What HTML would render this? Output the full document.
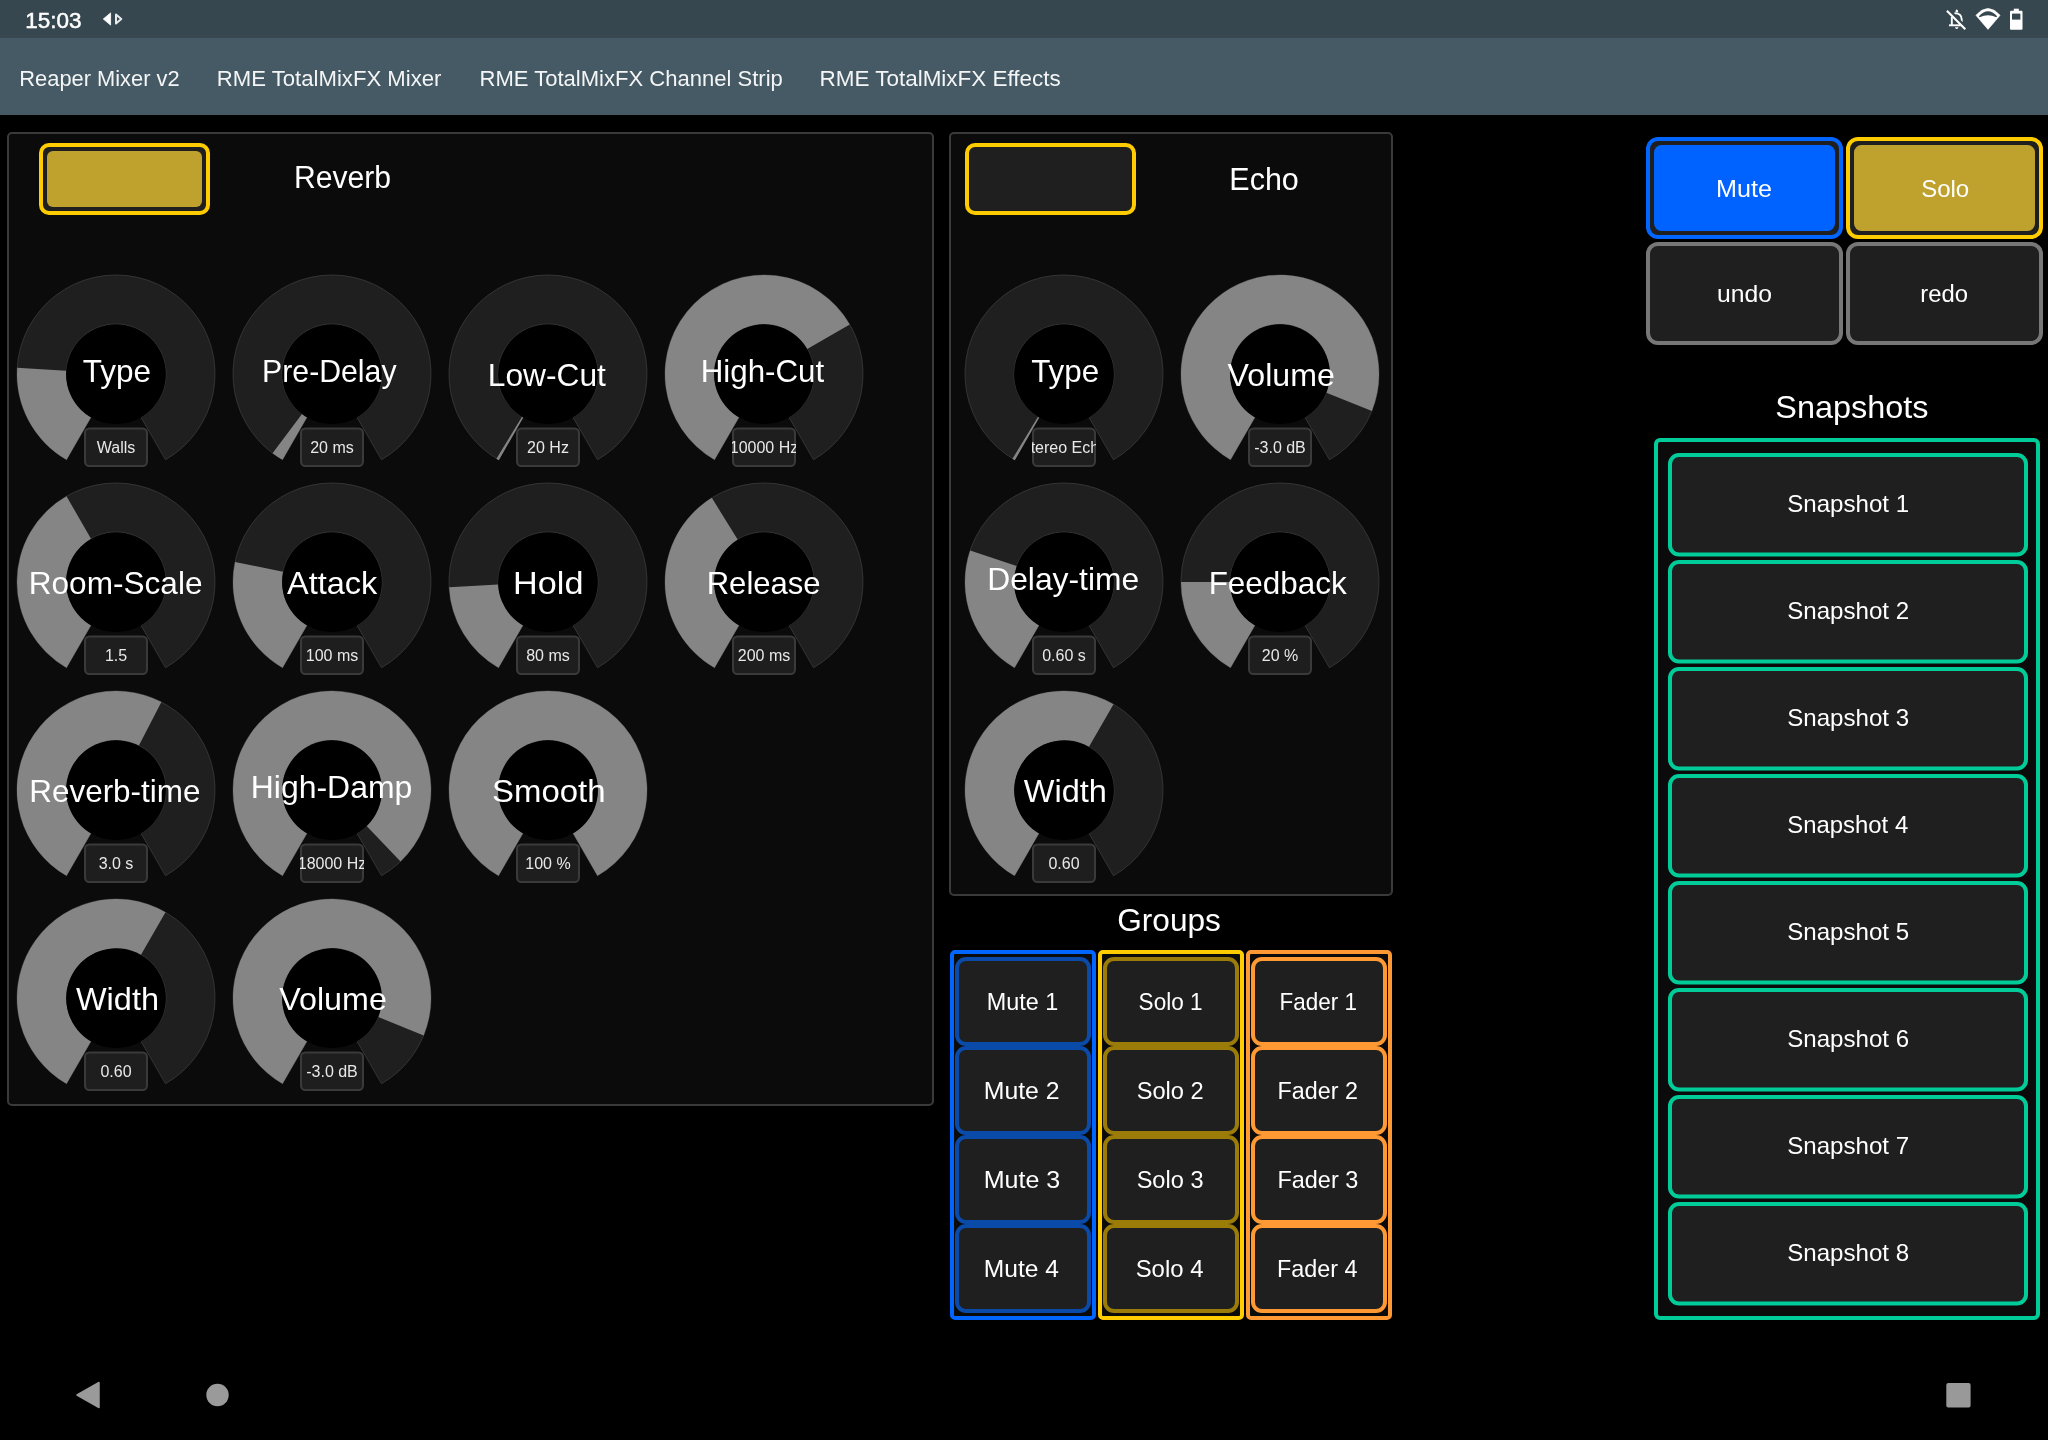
<!DOCTYPE html><html><head><meta charset="utf-8"><style>html,body{margin:0;padding:0;background:#000;width:2048px;height:1440px;overflow:hidden}svg{display:block;will-change:transform}text{font-family:"Liberation Sans", sans-serif}</style></head><body>
<svg width="2048" height="1440" viewBox="0 0 2048 1440">
<rect width="2048" height="1440" fill="#000"/>
<rect x="0" y="0" width="2048" height="38" fill="#37474f"/>
<text x="26" y="28.3" font-size="22" fill="#fff" text-anchor="start" transform="matrix(1.0212,0,0,1,-1.192,0)" stroke="#fff" stroke-width="0.5">15:03</text>
<path d="M103.3,19 L110.6,12.9 L110.6,25.1 Z" fill="#fff" stroke="#fff" stroke-width="0.8" stroke-linejoin="round"/>
<path d="M116,14.5 L121.3,19 L116,23.5 Z" fill="none" stroke="#e8eaeb" stroke-width="2" stroke-linejoin="round"/>
<g fill="none" stroke="#fff" stroke-width="1.9"><path d="M1951.8,25.3 L1951.8,17"/><path d="M1954.3,13.4 Q1961.7,12.9 1961.7,19.5 L1961.7,22"/><path d="M1949,25.3 L1960.6,25.3"/></g><path d="M1955.3,12.6 Q1955.6,9.5 1956.8,9.3 Q1958,9.5 1958.3,12.6 Z" fill="#fff"/><path d="M1955,27.2 L1958.5,27.2 Q1958.3,29 1956.75,29 Q1955.2,29 1955,27.2 Z" fill="#fff"/><line x1="1948.4" y1="9.4" x2="1966.8" y2="27.9" stroke="#37474f" stroke-width="2.2"/><line x1="1946.9" y1="10.8" x2="1965.3" y2="29.2" stroke="#fff" stroke-width="2.1"/>
<path d="M1975.9,15.3 Q1988,1.6 2000.1,15.3 L1988,29.4 Z" fill="#fff" stroke="#fff" stroke-width="0.6" stroke-linejoin="round"/>
<path d="M1978.9,16.2 Q1988,6.3 1997.1,16.2 L1996.3,17.3 Q1988,13.4 1979.7,17.3 Z" fill="#37474f"/>
<rect x="2010" y="10.8" width="12.5" height="19" rx="1" fill="#fff"/><rect x="2013.8" y="8.7" width="5" height="3" fill="#fff"/><rect x="2012" y="13.6" width="8.4" height="6" fill="#37474f"/>
<rect x="0" y="38" width="2048" height="77" fill="#455a64"/>
<text x="18.8" y="86" font-size="22" fill="#f4f5f6" text-anchor="start" transform="matrix(0.9937,0,0,1,0.633,0)" >Reaper Mixer v2</text>
<text x="216" y="86" font-size="22" fill="#f4f5f6" text-anchor="start" transform="matrix(1.0068,0,0,1,-0.680,0)" >RME TotalMixFX Mixer</text>
<text x="479" y="86" font-size="22" fill="#f4f5f6" text-anchor="start" transform="matrix(1.0020,0,0,1,-0.465,0)" >RME TotalMixFX Channel Strip</text>
<text x="819" y="86" font-size="22" fill="#f4f5f6" text-anchor="start" transform="matrix(1.0215,0,0,1,-17.118,0)" >RME TotalMixFX Effects</text>
<rect x="8.0" y="133.0" width="925" height="972" rx="4.0" fill="#0b0b0b" stroke="#3a3a3a" stroke-width="2"/>
<rect x="950.0" y="133.0" width="442" height="762" rx="4.0" fill="#0b0b0b" stroke="#3a3a3a" stroke-width="2"/>
<rect x="41.0" y="145.0" width="167" height="68" rx="8.0" fill="#1f1f1f" stroke="#ffcc00" stroke-width="4"/>
<rect x="47" y="151" width="155" height="56" rx="6" fill="#bfa22e"/>
<text x="343.5" y="188.1" font-size="31.5" fill="#fff" text-anchor="middle" transform="matrix(0.9567,0,0,1,13.916,0)" >Reverb</text>
<rect x="967.0" y="145.0" width="167" height="68" rx="8.0" fill="#1f1f1f" stroke="#ffcc00" stroke-width="4"/>
<text x="1264.5" y="189.8" font-size="31.5" fill="#fff" text-anchor="middle" transform="matrix(0.9676,0,0,1,40.526,0)" >Echo</text>
<path d="M66.50,459.74 A99,99 0 1 1 165.50,459.74 L141.00,417.30 A50,50 0 1 0 91.00,417.30 Z" fill="#1f1f1f" stroke="#343434" stroke-width="1"/>
<path d="M66.50,459.74 A99,99 0 0 1 17.20,367.78 L66.10,370.86 A50,50 0 0 0 91.00,417.30 Z" fill="#858585"/>
<circle cx="116" cy="374.3" r="49.8" fill="#000"/>
<text x="116" y="382.5" font-size="32" fill="#fff" text-anchor="middle" transform="matrix(0.9851,0,0,1,2.724,0)" >Type</text>
<rect x="85" y="428.5" width="62" height="37.5" rx="4.5" fill="#1e1e1e" stroke="#3a3a3a" stroke-width="2"/>
<clipPath id="c116_374"><rect x="84" y="427.5" width="64" height="39.5"/></clipPath>
<text x="116" y="453" font-size="16" fill="#e8e8e8" text-anchor="middle" clip-path="url(#c116_374)">Walls</text>
<path d="M282.50,459.74 A99,99 0 1 1 381.50,459.74 L357.00,417.30 A50,50 0 1 0 307.00,417.30 Z" fill="#1f1f1f" stroke="#343434" stroke-width="1"/>
<path d="M282.50,459.74 A99,99 0 0 1 272.56,453.17 L301.98,413.98 A50,50 0 0 0 307.00,417.30 Z" fill="#858585"/>
<circle cx="332" cy="374.3" r="49.8" fill="#000"/>
<text x="332" y="382.5" font-size="32" fill="#fff" text-anchor="middle" transform="matrix(0.9460,0,0,1,15.245,0)" >Pre-Delay</text>
<rect x="301" y="428.5" width="62" height="37.5" rx="4.5" fill="#1e1e1e" stroke="#3a3a3a" stroke-width="2"/>
<clipPath id="c332_374"><rect x="300" y="427.5" width="64" height="39.5"/></clipPath>
<text x="332" y="453" font-size="16" fill="#e8e8e8" text-anchor="middle" clip-path="url(#c332_374)">20 ms</text>
<path d="M498.50,459.74 A99,99 0 1 1 597.50,459.74 L573.00,417.30 A50,50 0 1 0 523.00,417.30 Z" fill="#1f1f1f" stroke="#343434" stroke-width="1"/>
<path d="M498.80,460.26 A99.3,99.3 0 0 1 496.41,458.85 L522.02,416.72 A50,50 0 0 0 523.23,417.43 Z" fill="#858585"/>
<circle cx="548" cy="374.3" r="49.8" fill="#000"/>
<text x="548" y="386" font-size="32" fill="#fff" text-anchor="middle" transform="matrix(0.9922,0,0,1,3.109,0)" >Low-Cut</text>
<rect x="517" y="428.5" width="62" height="37.5" rx="4.5" fill="#1e1e1e" stroke="#3a3a3a" stroke-width="2"/>
<clipPath id="c548_374"><rect x="516" y="427.5" width="64" height="39.5"/></clipPath>
<text x="548" y="453" font-size="16" fill="#e8e8e8" text-anchor="middle" clip-path="url(#c548_374)">20 Hz</text>
<path d="M714.50,459.74 A99,99 0 1 1 813.50,459.74 L789.00,417.30 A50,50 0 1 0 739.00,417.30 Z" fill="#1f1f1f" stroke="#343434" stroke-width="1"/>
<path d="M714.50,459.74 A99,99 0 1 1 849.74,324.50 L807.30,349.00 A50,50 0 1 0 739.00,417.30 Z" fill="#858585"/>
<circle cx="764" cy="374.3" r="49.8" fill="#000"/>
<text x="764" y="382.5" font-size="32" fill="#fff" text-anchor="middle" transform="matrix(0.9789,0,0,1,14.581,0)" >High-Cut</text>
<rect x="733" y="428.5" width="62" height="37.5" rx="4.5" fill="#1e1e1e" stroke="#3a3a3a" stroke-width="2"/>
<clipPath id="c764_374"><rect x="732" y="427.5" width="64" height="39.5"/></clipPath>
<text x="764" y="453" font-size="16" fill="#e8e8e8" text-anchor="middle" clip-path="url(#c764_374)">10000 Hz</text>
<path d="M66.50,667.74 A99,99 0 1 1 165.50,667.74 L141.00,625.30 A50,50 0 1 0 91.00,625.30 Z" fill="#1f1f1f" stroke="#343434" stroke-width="1"/>
<path d="M66.50,667.74 A99,99 0 0 1 66.50,496.26 L91.00,538.70 A50,50 0 0 0 91.00,625.30 Z" fill="#858585"/>
<circle cx="116" cy="582.3" r="49.8" fill="#000"/>
<text x="116" y="594" font-size="32" fill="#fff" text-anchor="middle" transform="matrix(0.9871,0,0,1,1.099,0)" >Room-Scale</text>
<rect x="85" y="636.5" width="62" height="37.5" rx="4.5" fill="#1e1e1e" stroke="#3a3a3a" stroke-width="2"/>
<clipPath id="c116_582"><rect x="84" y="635.5" width="64" height="39.5"/></clipPath>
<text x="116" y="661" font-size="16" fill="#e8e8e8" text-anchor="middle" clip-path="url(#c116_582)">1.5</text>
<path d="M282.50,667.74 A99,99 0 1 1 381.50,667.74 L357.00,625.30 A50,50 0 1 0 307.00,625.30 Z" fill="#1f1f1f" stroke="#343434" stroke-width="1"/>
<path d="M282.50,667.74 A99,99 0 0 1 235.06,561.92 L283.04,571.86 A50,50 0 0 0 307.00,625.30 Z" fill="#858585"/>
<circle cx="332" cy="582.3" r="49.8" fill="#000"/>
<text x="332" y="594" font-size="32" fill="#fff" text-anchor="middle" transform="matrix(1.0159,0,0,1,-5.082,0)" >Attack</text>
<rect x="301" y="636.5" width="62" height="37.5" rx="4.5" fill="#1e1e1e" stroke="#3a3a3a" stroke-width="2"/>
<clipPath id="c332_582"><rect x="300" y="635.5" width="64" height="39.5"/></clipPath>
<text x="332" y="661" font-size="16" fill="#e8e8e8" text-anchor="middle" clip-path="url(#c332_582)">100 ms</text>
<path d="M498.50,667.74 A99,99 0 1 1 597.50,667.74 L573.00,625.30 A50,50 0 1 0 523.00,625.30 Z" fill="#1f1f1f" stroke="#343434" stroke-width="1"/>
<path d="M498.50,667.74 A99,99 0 0 1 449.14,587.18 L498.07,584.62 A50,50 0 0 0 523.00,625.30 Z" fill="#858585"/>
<circle cx="548" cy="582.3" r="49.8" fill="#000"/>
<text x="548" y="594" font-size="32" fill="#fff" text-anchor="middle" transform="matrix(1.0700,0,0,1,-38.060,0)" >Hold</text>
<rect x="517" y="636.5" width="62" height="37.5" rx="4.5" fill="#1e1e1e" stroke="#3a3a3a" stroke-width="2"/>
<clipPath id="c548_582"><rect x="516" y="635.5" width="64" height="39.5"/></clipPath>
<text x="548" y="661" font-size="16" fill="#e8e8e8" text-anchor="middle" clip-path="url(#c548_582)">80 ms</text>
<path d="M714.50,667.74 A99,99 0 1 1 813.50,667.74 L789.00,625.30 A50,50 0 1 0 739.00,625.30 Z" fill="#1f1f1f" stroke="#343434" stroke-width="1"/>
<path d="M714.50,667.74 A99,99 0 0 1 711.83,497.86 L737.65,539.51 A50,50 0 0 0 739.00,625.30 Z" fill="#858585"/>
<circle cx="764" cy="582.3" r="49.8" fill="#000"/>
<text x="764" y="594" font-size="32" fill="#fff" text-anchor="middle" transform="matrix(0.9708,0,0,1,21.976,0)" >Release</text>
<rect x="733" y="636.5" width="62" height="37.5" rx="4.5" fill="#1e1e1e" stroke="#3a3a3a" stroke-width="2"/>
<clipPath id="c764_582"><rect x="732" y="635.5" width="64" height="39.5"/></clipPath>
<text x="764" y="661" font-size="16" fill="#e8e8e8" text-anchor="middle" clip-path="url(#c764_582)">200 ms</text>
<path d="M66.50,875.74 A99,99 0 1 1 165.50,875.74 L141.00,833.30 A50,50 0 1 0 91.00,833.30 Z" fill="#1f1f1f" stroke="#343434" stroke-width="1"/>
<path d="M66.50,875.74 A99,99 0 0 1 161.41,702.03 L138.93,745.57 A50,50 0 0 0 91.00,833.30 Z" fill="#858585"/>
<circle cx="116" cy="790.3" r="49.8" fill="#000"/>
<text x="116" y="802" font-size="32" fill="#fff" text-anchor="middle" transform="matrix(0.9828,0,0,1,0.849,0)" >Reverb-time</text>
<rect x="85" y="844.5" width="62" height="37.5" rx="4.5" fill="#1e1e1e" stroke="#3a3a3a" stroke-width="2"/>
<clipPath id="c116_790"><rect x="84" y="843.5" width="64" height="39.5"/></clipPath>
<text x="116" y="869" font-size="16" fill="#e8e8e8" text-anchor="middle" clip-path="url(#c116_790)">3.0 s</text>
<path d="M282.50,875.74 A99,99 0 1 1 381.50,875.74 L357.00,833.30 A50,50 0 1 0 307.00,833.30 Z" fill="#1f1f1f" stroke="#343434" stroke-width="1"/>
<path d="M282.50,875.74 A99,99 0 1 1 400.52,861.45 L366.61,826.09 A50,50 0 1 0 307.00,833.30 Z" fill="#858585"/>
<circle cx="332" cy="790.3" r="49.8" fill="#000"/>
<text x="332" y="798.5" font-size="32" fill="#fff" text-anchor="middle" transform="matrix(0.9981,0,0,1,0.185,0)" >High-Damp</text>
<rect x="301" y="844.5" width="62" height="37.5" rx="4.5" fill="#1e1e1e" stroke="#3a3a3a" stroke-width="2"/>
<clipPath id="c332_790"><rect x="300" y="843.5" width="64" height="39.5"/></clipPath>
<text x="332" y="869" font-size="16" fill="#e8e8e8" text-anchor="middle" clip-path="url(#c332_790)">18000 Hz</text>
<path d="M498.50,875.74 A99,99 0 1 1 597.50,875.74 L573.00,833.30 A50,50 0 1 0 523.00,833.30 Z" fill="#1f1f1f" stroke="#343434" stroke-width="1"/>
<path d="M498.50,875.74 A99,99 0 1 1 597.50,875.74 L573.00,833.30 A50,50 0 1 0 523.00,833.30 Z" fill="#858585"/>
<circle cx="548" cy="790.3" r="49.8" fill="#000"/>
<text x="548" y="802" font-size="32" fill="#fff" text-anchor="middle" transform="matrix(1.0292,0,0,1,-15.176,0)" >Smooth</text>
<rect x="517" y="844.5" width="62" height="37.5" rx="4.5" fill="#1e1e1e" stroke="#3a3a3a" stroke-width="2"/>
<clipPath id="c548_790"><rect x="516" y="843.5" width="64" height="39.5"/></clipPath>
<text x="548" y="869" font-size="16" fill="#e8e8e8" text-anchor="middle" clip-path="url(#c548_790)">100 %</text>
<path d="M66.50,1083.74 A99,99 0 1 1 165.50,1083.74 L141.00,1041.30 A50,50 0 1 0 91.00,1041.30 Z" fill="#1f1f1f" stroke="#343434" stroke-width="1"/>
<path d="M66.50,1083.74 A99,99 0 0 1 165.50,912.26 L141.00,954.70 A50,50 0 0 0 91.00,1041.30 Z" fill="#858585"/>
<circle cx="116" cy="998.3" r="49.8" fill="#000"/>
<text x="116" y="1010" font-size="32" fill="#fff" text-anchor="middle" transform="matrix(1.0167,0,0,1,-0.467,0)" >Width</text>
<rect x="85" y="1052.5" width="62" height="37.5" rx="4.5" fill="#1e1e1e" stroke="#3a3a3a" stroke-width="2"/>
<clipPath id="c116_998"><rect x="84" y="1051.5" width="64" height="39.5"/></clipPath>
<text x="116" y="1077" font-size="16" fill="#e8e8e8" text-anchor="middle" clip-path="url(#c116_998)">0.60</text>
<path d="M282.50,1083.74 A99,99 0 1 1 381.50,1083.74 L357.00,1041.30 A50,50 0 1 0 307.00,1041.30 Z" fill="#1f1f1f" stroke="#343434" stroke-width="1"/>
<path d="M282.50,1083.74 A99,99 0 1 1 423.66,1035.41 L378.29,1016.89 A50,50 0 1 0 307.00,1041.30 Z" fill="#858585"/>
<circle cx="332" cy="998.3" r="49.8" fill="#000"/>
<text x="332" y="1010" font-size="32" fill="#fff" text-anchor="middle" transform="matrix(1.0086,0,0,1,-1.791,0)" >Volume</text>
<rect x="301" y="1052.5" width="62" height="37.5" rx="4.5" fill="#1e1e1e" stroke="#3a3a3a" stroke-width="2"/>
<clipPath id="c332_998"><rect x="300" y="1051.5" width="64" height="39.5"/></clipPath>
<text x="332" y="1077" font-size="16" fill="#e8e8e8" text-anchor="middle" clip-path="url(#c332_998)">-3.0 dB</text>
<path d="M1014.50,459.74 A99,99 0 1 1 1113.50,459.74 L1089.00,417.30 A50,50 0 1 0 1039.00,417.30 Z" fill="#1f1f1f" stroke="#343434" stroke-width="1"/>
<path d="M1014.80,460.26 A99.3,99.3 0 0 1 1012.41,458.85 L1038.02,416.72 A50,50 0 0 0 1039.23,417.43 Z" fill="#858585"/>
<circle cx="1064" cy="374.3" r="49.8" fill="#000"/>
<text x="1064" y="382.5" font-size="32" fill="#fff" text-anchor="middle" transform="matrix(0.9806,0,0,1,21.785,0)" >Type</text>
<rect x="1033" y="428.5" width="62" height="37.5" rx="4.5" fill="#1e1e1e" stroke="#3a3a3a" stroke-width="2"/>
<clipPath id="c1064_374"><rect x="1032" y="427.5" width="64" height="39.5"/></clipPath>
<text x="1064" y="453" font-size="16" fill="#e8e8e8" text-anchor="middle" clip-path="url(#c1064_374)">Stereo Echo</text>
<path d="M1230.50,459.74 A99,99 0 1 1 1329.50,459.74 L1305.00,417.30 A50,50 0 1 0 1255.00,417.30 Z" fill="#1f1f1f" stroke="#343434" stroke-width="1"/>
<path d="M1230.50,459.74 A99,99 0 1 1 1371.86,410.93 L1326.39,392.65 A50,50 0 1 0 1255.00,417.30 Z" fill="#858585"/>
<circle cx="1280" cy="374.3" r="49.8" fill="#000"/>
<text x="1280" y="386" font-size="32" fill="#fff" text-anchor="middle" transform="matrix(1.0048,0,0,1,-4.943,0)" >Volume</text>
<rect x="1249" y="428.5" width="62" height="37.5" rx="4.5" fill="#1e1e1e" stroke="#3a3a3a" stroke-width="2"/>
<clipPath id="c1280_374"><rect x="1248" y="427.5" width="64" height="39.5"/></clipPath>
<text x="1280" y="453" font-size="16" fill="#e8e8e8" text-anchor="middle" clip-path="url(#c1280_374)">-3.0 dB</text>
<path d="M1014.50,667.74 A99,99 0 1 1 1113.50,667.74 L1089.00,625.30 A50,50 0 1 0 1039.00,625.30 Z" fill="#1f1f1f" stroke="#343434" stroke-width="1"/>
<path d="M1014.50,667.74 A99,99 0 0 1 970.17,550.42 L1016.61,566.05 A50,50 0 0 0 1039.00,625.30 Z" fill="#858585"/>
<circle cx="1064" cy="582.3" r="49.8" fill="#000"/>
<text x="1064" y="590.5" font-size="32" fill="#fff" text-anchor="middle" transform="matrix(0.9940,0,0,1,5.580,0)" >Delay-time</text>
<rect x="1033" y="636.5" width="62" height="37.5" rx="4.5" fill="#1e1e1e" stroke="#3a3a3a" stroke-width="2"/>
<clipPath id="c1064_582"><rect x="1032" y="635.5" width="64" height="39.5"/></clipPath>
<text x="1064" y="661" font-size="16" fill="#e8e8e8" text-anchor="middle" clip-path="url(#c1064_582)">0.60 s</text>
<path d="M1230.50,667.74 A99,99 0 1 1 1329.50,667.74 L1305.00,625.30 A50,50 0 1 0 1255.00,625.30 Z" fill="#1f1f1f" stroke="#343434" stroke-width="1"/>
<path d="M1230.50,667.74 A99,99 0 0 1 1181.00,582.00 L1230.00,582.00 A50,50 0 0 0 1255.00,625.30 Z" fill="#858585"/>
<circle cx="1280" cy="582.3" r="49.8" fill="#000"/>
<text x="1280" y="594" font-size="32" fill="#fff" text-anchor="middle" transform="matrix(0.9818,0,0,1,20.935,0)" >Feedback</text>
<rect x="1249" y="636.5" width="62" height="37.5" rx="4.5" fill="#1e1e1e" stroke="#3a3a3a" stroke-width="2"/>
<clipPath id="c1280_582"><rect x="1248" y="635.5" width="64" height="39.5"/></clipPath>
<text x="1280" y="661" font-size="16" fill="#e8e8e8" text-anchor="middle" clip-path="url(#c1280_582)">20 %</text>
<path d="M1014.50,875.74 A99,99 0 1 1 1113.50,875.74 L1089.00,833.30 A50,50 0 1 0 1039.00,833.30 Z" fill="#1f1f1f" stroke="#343434" stroke-width="1"/>
<path d="M1014.50,875.74 A99,99 0 0 1 1113.50,704.26 L1089.00,746.70 A50,50 0 0 0 1039.00,833.30 Z" fill="#858585"/>
<circle cx="1064" cy="790.3" r="49.8" fill="#000"/>
<text x="1064" y="802" font-size="32" fill="#fff" text-anchor="middle" transform="matrix(1.0154,0,0,1,-15.054,0)" >Width</text>
<rect x="1033" y="844.5" width="62" height="37.5" rx="4.5" fill="#1e1e1e" stroke="#3a3a3a" stroke-width="2"/>
<clipPath id="c1064_790"><rect x="1032" y="843.5" width="64" height="39.5"/></clipPath>
<text x="1064" y="869" font-size="16" fill="#e8e8e8" text-anchor="middle" clip-path="url(#c1064_790)">0.60</text>
<text x="1169" y="931.2" font-size="31" fill="#fff" text-anchor="middle" transform="matrix(1.0204,0,0,1,-23.757,0)" >Groups</text>
<rect x="952.0" y="952.0" width="142" height="366" rx="3.0" fill="#0b0b0b" stroke="#0066ff" stroke-width="4"/>
<rect x="957.0" y="959.0" width="132" height="85" rx="9.0" fill="#1f1f1f" stroke="#0a4aa8" stroke-width="4"/>
<text x="1023.0" y="1010.0" font-size="24" fill="#fff" text-anchor="middle" transform="matrix(0.9754,0,0,1,24.567,0)" >Mute 1</text>
<rect x="957.0" y="1048.0" width="132" height="85" rx="9.0" fill="#1f1f1f" stroke="#0a4aa8" stroke-width="4"/>
<text x="1023.0" y="1099.0" font-size="24" fill="#fff" text-anchor="middle" transform="matrix(1.0348,0,0,1,-36.900,0)" >Mute 2</text>
<rect x="957.0" y="1137.0" width="132" height="85" rx="9.0" fill="#1f1f1f" stroke="#0a4aa8" stroke-width="4"/>
<text x="1023.0" y="1188.0" font-size="24" fill="#fff" text-anchor="middle" transform="matrix(1.0435,0,0,1,-45.500,0)" >Mute 3</text>
<rect x="957.0" y="1226.0" width="132" height="85" rx="9.0" fill="#1f1f1f" stroke="#0a4aa8" stroke-width="4"/>
<text x="1023.0" y="1277.0" font-size="24" fill="#fff" text-anchor="middle" transform="matrix(1.0243,0,0,1,-26.519,0)" >Mute 4</text>
<rect x="1100.0" y="952.0" width="142" height="366" rx="3.0" fill="#0b0b0b" stroke="#ffcc00" stroke-width="4"/>
<rect x="1105.0" y="959.0" width="132" height="85" rx="9.0" fill="#1f1f1f" stroke="#9c7c08" stroke-width="4"/>
<text x="1171.0" y="1010.0" font-size="24" fill="#fff" text-anchor="middle" transform="matrix(0.9400,0,0,1,69.840,0)" >Solo 1</text>
<rect x="1105.0" y="1048.0" width="132" height="85" rx="9.0" fill="#1f1f1f" stroke="#9c7c08" stroke-width="4"/>
<text x="1171.0" y="1099.0" font-size="24" fill="#fff" text-anchor="middle" transform="matrix(0.9862,0,0,1,15.371,0)" >Solo 2</text>
<rect x="1105.0" y="1137.0" width="132" height="85" rx="9.0" fill="#1f1f1f" stroke="#9c7c08" stroke-width="4"/>
<text x="1171.0" y="1188.0" font-size="24" fill="#fff" text-anchor="middle" transform="matrix(0.9831,0,0,1,18.875,0)" >Solo 3</text>
<rect x="1105.0" y="1226.0" width="132" height="85" rx="9.0" fill="#1f1f1f" stroke="#9c7c08" stroke-width="4"/>
<text x="1171.0" y="1277.0" font-size="24" fill="#fff" text-anchor="middle" transform="matrix(0.9969,0,0,1,2.205,0)" >Solo 4</text>
<rect x="1248.0" y="952.0" width="142" height="366" rx="3.0" fill="#0b0b0b" stroke="#ff9933" stroke-width="4"/>
<rect x="1253.0" y="959.0" width="132" height="85" rx="9.0" fill="#1f1f1f" stroke="#ff9933" stroke-width="4"/>
<text x="1319.0" y="1010.0" font-size="24" fill="#fff" text-anchor="middle" transform="matrix(0.9367,0,0,1,82.713,0)" >Fader 1</text>
<rect x="1253.0" y="1048.0" width="132" height="85" rx="9.0" fill="#1f1f1f" stroke="#ff9933" stroke-width="4"/>
<text x="1319.0" y="1099.0" font-size="24" fill="#fff" text-anchor="middle" transform="matrix(0.9722,0,0,1,35.346,0)" >Fader 2</text>
<rect x="1253.0" y="1137.0" width="132" height="85" rx="9.0" fill="#1f1f1f" stroke="#ff9933" stroke-width="4"/>
<text x="1319.0" y="1188.0" font-size="24" fill="#fff" text-anchor="middle" transform="matrix(0.9785,0,0,1,27.244,0)" >Fader 3</text>
<rect x="1253.0" y="1226.0" width="132" height="85" rx="9.0" fill="#1f1f1f" stroke="#ff9933" stroke-width="4"/>
<text x="1319.0" y="1277.0" font-size="24" fill="#fff" text-anchor="middle" transform="matrix(0.9747,0,0,1,31.605,0)" >Fader 4</text>
<rect x="1648.0" y="139.0" width="193" height="98" rx="10.0" fill="#1f1f1f" stroke="#0066ff" stroke-width="4"/>
<rect x="1654" y="145" width="181" height="86" rx="7.5" fill="#0062ff"/>
<text x="1744.5" y="196.8" font-size="24" fill="#fff" text-anchor="middle" transform="matrix(1.0480,0,0,1,-84.260,0)" >Mute</text>
<rect x="1848.0" y="139.0" width="193" height="98" rx="10.0" fill="#1f1f1f" stroke="#ffcc00" stroke-width="4"/>
<rect x="1854" y="145" width="181" height="86" rx="7.5" fill="#bfa22e"/>
<text x="1944.5" y="196.8" font-size="24" fill="#fff" text-anchor="middle" transform="matrix(1.0000,0,0,1,0.700,0)" >Solo</text>
<rect x="1648.0" y="244.0" width="193" height="99" rx="10.0" fill="#1f1f1f" stroke="#777777" stroke-width="4"/>
<text x="1744.5" y="302" font-size="24" fill="#fff" text-anchor="middle" transform="matrix(1.0300,0,0,1,-52.300,0)" >undo</text>
<rect x="1848.0" y="244.0" width="193" height="99" rx="10.0" fill="#1f1f1f" stroke="#777777" stroke-width="4"/>
<text x="1944.5" y="302" font-size="24" fill="#fff" text-anchor="middle" transform="matrix(0.9933,0,0,1,12.713,0)" >redo</text>
<text x="1852" y="418.3" font-size="32" fill="#fff" text-anchor="middle" transform="matrix(1.0136,0,0,1,-25.204,0)" >Snapshots</text>
<rect x="1656.0" y="440.0" width="382" height="878" rx="4.0" fill="#0b0b0b" stroke="#00cc99" stroke-width="4"/>
<rect x="1670.0" y="455.0" width="356" height="99.5" rx="9.0" fill="#1f1f1f" stroke="#00cc99" stroke-width="4"/>
<text x="1848" y="512" font-size="24" fill="#fff" text-anchor="middle" transform="matrix(1.0042,0,0,1,-7.581,0)" >Snapshot 1</text>
<rect x="1670.0" y="562.0" width="356" height="99.5" rx="9.0" fill="#1f1f1f" stroke="#00cc99" stroke-width="4"/>
<text x="1848" y="619" font-size="24" fill="#fff" text-anchor="middle" transform="matrix(1.0042,0,0,1,-7.581,0)" >Snapshot 2</text>
<rect x="1670.0" y="669.0" width="356" height="99.5" rx="9.0" fill="#1f1f1f" stroke="#00cc99" stroke-width="4"/>
<text x="1848" y="726" font-size="24" fill="#fff" text-anchor="middle" transform="matrix(1.0042,0,0,1,-7.581,0)" >Snapshot 3</text>
<rect x="1670.0" y="776.0" width="356" height="99.5" rx="9.0" fill="#1f1f1f" stroke="#00cc99" stroke-width="4"/>
<text x="1848" y="833" font-size="24" fill="#fff" text-anchor="middle" transform="matrix(0.9958,0,0,1,7.517,0)" >Snapshot 4</text>
<rect x="1670.0" y="883.0" width="356" height="99.5" rx="9.0" fill="#1f1f1f" stroke="#00cc99" stroke-width="4"/>
<text x="1848" y="940" font-size="24" fill="#fff" text-anchor="middle" transform="matrix(1.0042,0,0,1,-7.581,0)" >Snapshot 5</text>
<rect x="1670.0" y="990.0" width="356" height="99.5" rx="9.0" fill="#1f1f1f" stroke="#00cc99" stroke-width="4"/>
<text x="1848" y="1047" font-size="24" fill="#fff" text-anchor="middle" transform="matrix(1.0042,0,0,1,-7.581,0)" >Snapshot 6</text>
<rect x="1670.0" y="1097.0" width="356" height="99.5" rx="9.0" fill="#1f1f1f" stroke="#00cc99" stroke-width="4"/>
<text x="1848" y="1154" font-size="24" fill="#fff" text-anchor="middle" transform="matrix(1.0042,0,0,1,-7.581,0)" >Snapshot 7</text>
<rect x="1670.0" y="1204.0" width="356" height="99.5" rx="9.0" fill="#1f1f1f" stroke="#00cc99" stroke-width="4"/>
<text x="1848" y="1261" font-size="24" fill="#fff" text-anchor="middle" transform="matrix(1.0042,0,0,1,-7.581,0)" >Snapshot 8</text>
<path d="M77,1395 L99,1382.5 L99,1407.5 Z" fill="#9a9a9a" stroke="#9a9a9a" stroke-width="1.5" stroke-linejoin="round"/>
<circle cx="217.5" cy="1395" r="11.2" fill="#9a9a9a"/>
<rect x="1946.3" y="1383" width="24.3" height="24.4" rx="2" fill="#999"/>
</svg></body></html>
